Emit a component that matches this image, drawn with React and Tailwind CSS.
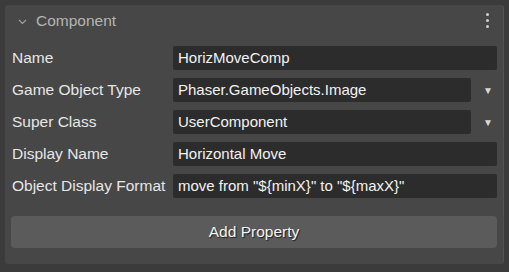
import React from "react";

const rows = [
  { label: "Name", value: "HorizMoveComp" },
  { label: "Game Object Type", value: "Phaser.GameObjects.Image", select: true },
  { label: "Super Class", value: "UserComponent", select: true },
  { label: "Display Name", value: "Horizontal Move" },
  { label: "Object Display Format", value: 'move from "${minX}" to "${maxX}"' },
];

const App = () => {
  return (
    <div
      className="w-[509px] h-[272px] bg-[#3b3b3b] pt-[5px] pl-[5px] pr-[5px] overflow-hidden"
      style={{ fontFamily: '"Liberation Sans", Arial, sans-serif' }}
    >
      <div className="w-[499px] h-[259px] bg-[#474747] rounded-[3px] border-r border-[#525252]">
        {/* Header */}
        <div className="h-[31px] flex items-center pl-[13px] pr-[14px]">
          <svg width="9" height="6" viewBox="0 0 9 6" className="mr-[9px] mt-[2px]">
            <path d="M1 1 L4.5 4.5 L8 1" fill="none" stroke="#a0a0a0" strokeWidth="1.2" />
          </svg>
          <span className="text-[15.5px] text-[#b4b4b4]">Component</span>
          <div className="ml-auto flex flex-col gap-[3px] items-center">
            <span className="w-[3px] h-[3px] rounded-full bg-[#d0d0d0]" />
            <span className="w-[3px] h-[3px] rounded-full bg-[#d0d0d0]" />
            <span className="w-[3px] h-[3px] rounded-full bg-[#d0d0d0]" />
          </div>
        </div>

        {/* Fields */}
        <div className="pt-[10px] pl-[7px] pr-[6px] flex flex-col gap-[8px]">
          {rows.map((r) => (
            <div key={r.label} className="flex items-center h-[24px]">
              <div className="w-[161px] flex-none text-[15.5px] text-[#e6e6e6] whitespace-nowrap">
                {r.label}
              </div>
              {r.select ? (
                <div className="flex-1 flex items-center h-full">
                  <div className="flex-1 h-full bg-[#2c2c2c] rounded-[2px] flex items-center pl-[5px] text-[15px] text-[#f2f2f2] whitespace-nowrap">
                    {r.value}
                  </div>
                  <div className="w-[26px] h-full flex items-center pl-[12px] text-[10px] text-[#d8d8d8]">
                    ▼
                  </div>
                </div>
              ) : (
                <div className="flex-1 h-full bg-[#2c2c2c] rounded-[2px] flex items-center pl-[5px] text-[15px] text-[#f2f2f2] whitespace-nowrap">
                  {r.value}
                </div>
              )}
            </div>
          ))}
        </div>

        {/* Add Property */}
        <div className="pt-[18px] pl-[6px] pr-[6px]">
          <button
            className="w-full h-[32px] bg-[#5b5b5b] rounded-[4px] text-[15.5px] text-[#f4f4f4] flex items-center justify-center"
            style={{ textShadow: "1px 1px 1px #1e1e1e" }}
          >
            Add Property
          </button>
        </div>
      </div>
    </div>
  );
};

export default App;
